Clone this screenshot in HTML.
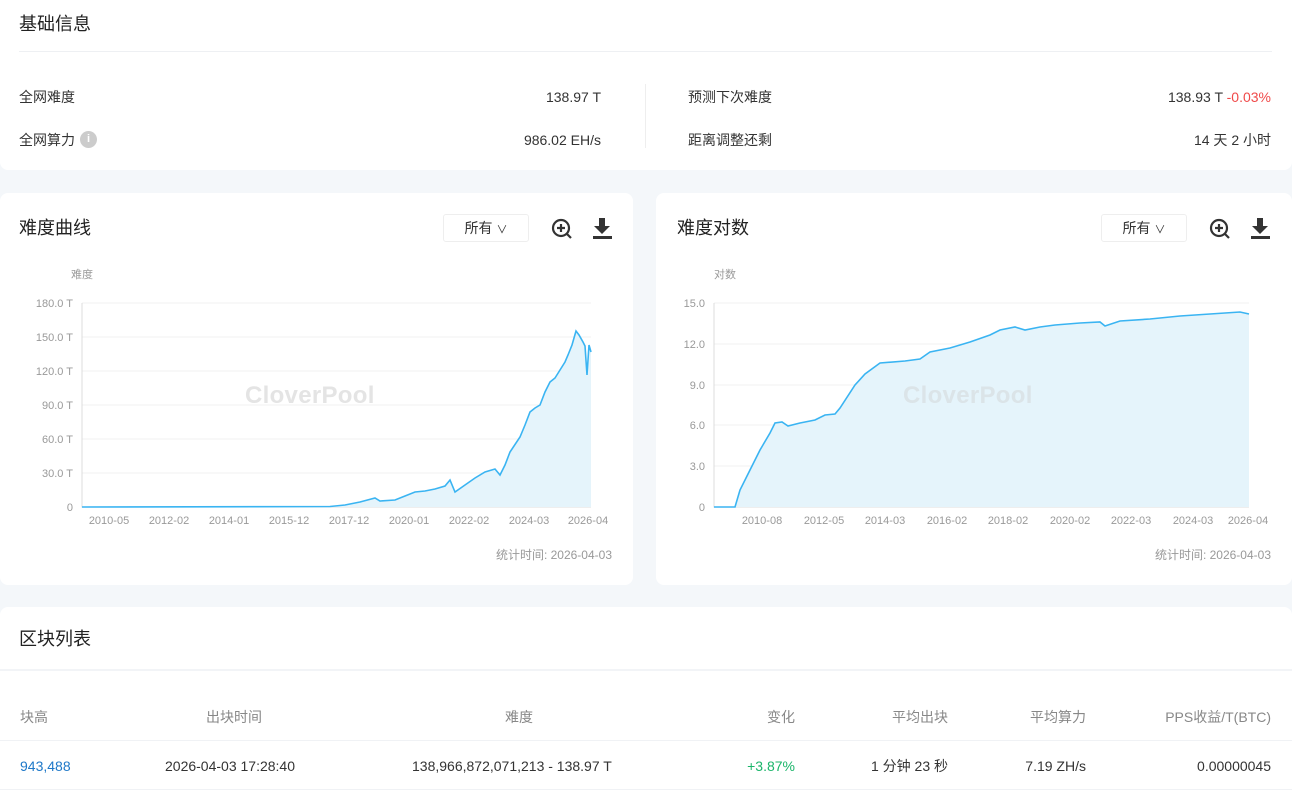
<!DOCTYPE html>
<html style="height:792px;overflow:hidden"><head><meta charset="utf-8"><style>
*{margin:0;padding:0;box-sizing:border-box}
body{width:1292px;height:792px;background:#f4f7fa;font-family:"Liberation Sans","Noto Sans CJK SC",sans-serif;color:#333;position:relative;overflow:hidden}
.card{position:absolute;background:#fff;border-radius:8px}
.a{position:absolute;white-space:nowrap;line-height:20px}
.h{font-size:18px;color:#222;line-height:24px}
.t{font-size:14px;color:#333}
.g{font-size:11px;color:#999}
.sel{position:absolute;border:1px solid #eee;border-radius:3px;width:86px;height:28px;font-size:14px;line-height:26px;text-align:center;color:#333}
.th{font-size:14px;color:#888;top:707px}
.td{font-size:14px;color:#333;top:756px}
</style></head><body>

<div class="card" style="left:0;top:0;width:1292px;height:170px;border-radius:0 0 8px 8px"></div>
<div class="a h" style="left:19px;top:12px">基础信息</div>
<div class="a" style="left:19px;top:51px;width:1253px;height:1px;background:#eef0f3"></div>
<div class="a t" style="left:19px;top:87px">全网难度</div>
<div class="a t" style="right:691px;top:87px">138.97 T</div>
<div class="a t" style="left:19px;top:130px">全网算力</div>
<div class="a" style="left:80px;top:131px;width:17px;height:17px;border-radius:50%;background:#ccc;color:#fff;font-size:11px;line-height:17px;text-align:center;font-weight:bold">i</div>
<div class="a t" style="right:691px;top:130px">986.02 EH/s</div>
<div class="a" style="left:645px;top:84px;width:1px;height:64px;background:#eee"></div>
<div class="a t" style="left:688px;top:87px">预测下次难度</div>
<div class="a t" style="right:21px;top:87px">138.93 T <span style="color:#f04a4a">-0.03%</span></div>
<div class="a t" style="left:688px;top:130px">距离调整还剩</div>
<div class="a t" style="right:21px;top:130px">14 天 2 小时</div>

<div class="card" style="left:0;top:193px;width:633px;height:392px"></div>
<div class="card" style="left:656px;top:193px;width:636px;height:392px"></div>

<div class="a h" style="left:19px;top:216px">难度曲线</div>
<div class="sel" style="left:443px;top:214px">所有 <span style="font-size:11px">&#x2228;</span></div>
<div class="a h" style="left:677px;top:216px">难度对数</div>
<div class="sel" style="left:1101px;top:214px">所有 <span style="font-size:11px">&#x2228;</span></div>

<svg class="a" style="left:0;top:0" width="1292" height="600">
<g fill="none" stroke="#333" stroke-width="2.2">
<circle cx="561" cy="228" r="8"/><path d="M567 234l4 4M557 228h8M561 224v8"/>
<circle cx="1219" cy="228" r="8"/><path d="M1225 234l4 4M1215 228h8M1219 224v8"/>
</g>
<g fill="#333">
<path d="M599 218h6v8h5l-8 8-8-8h5z"/><rect x="593" y="236" width="19" height="3"/>
<path d="M1257 218h6v8h5l-8 8-8-8h5z"/><rect x="1251" y="236" width="19" height="3"/>
</g>
<g stroke="#f0f0f0" stroke-width="1" fill="none">
<path d="M82 303H591M82 337H591M82 371H591M82 405H591M82 439H591M82 473H591"/>
<path d="M714 303H1249M714 344H1249M714 385H1249M714 425H1249M714 466H1249"/>
</g>
<g stroke="#ddd" fill="none"><path d="M82 303V507H591M714 303V507H1249"/></g>
<path d="M82 507L330 506.5L345 505L360 502L375 498L380 501L395 500L405 496L415 492L425 491L435 489L445 486L450 480L455 492L465 485L475 478L485 472L495 469L500 475L505 465L510 452L520 437L525 425L530 412L535 408L540 405L545 392L550 382L555 378L560 370L565 362L568 355L572 345L576 331L579 335L583 342L585 346L587 375L589 345L591 352L591 507Z" fill="#e5f4fb"/>
<path d="M714 507L735 507L740 490L750 470L760 450L770 433L775 423L782 422L788 426L800 423L815 420L825 415L835 414L840 408L855 385L865 374L880 363L905 361L920 359L930 352L950 348L970 342L990 335L1000 330L1015 327L1025 330L1040 327L1055 325L1080 323L1100 322L1105 326L1120 321L1150 319L1180 316L1210 314L1240 312L1249 314L1249 507Z" fill="#e5f4fb"/>
<text x="245" y="403" font-size="24" fill="#e4e4e4" font-family="Liberation Sans" font-weight="bold" letter-spacing="0.3">CloverPool</text>
<text x="903" y="403" font-size="24" fill="#dbe4e8" font-family="Liberation Sans" font-weight="bold" letter-spacing="0.3">CloverPool</text>
<path d="M82 507L330 506.5L345 505L360 502L375 498L380 501L395 500L405 496L415 492L425 491L435 489L445 486L450 480L455 492L465 485L475 478L485 472L495 469L500 475L505 465L510 452L520 437L525 425L530 412L535 408L540 405L545 392L550 382L555 378L560 370L565 362L568 355L572 345L576 331L579 335L583 342L585 346L587 375L589 345L591 352" fill="none" stroke="#3ab4f2" stroke-width="1.6"/>
<path d="M714 507L735 507L740 490L750 470L760 450L770 433L775 423L782 422L788 426L800 423L815 420L825 415L835 414L840 408L855 385L865 374L880 363L905 361L920 359L930 352L950 348L970 342L990 335L1000 330L1015 327L1025 330L1040 327L1055 325L1080 323L1100 322L1105 326L1120 321L1150 319L1180 316L1210 314L1240 312L1249 314" fill="none" stroke="#3ab4f2" stroke-width="1.6"/>
<g font-size="11" fill="#999" font-family="Liberation Sans" text-anchor="end">
<text x="73" y="307">180.0 T</text><text x="73" y="341">150.0 T</text><text x="73" y="375">120.0 T</text><text x="73" y="409">90.0 T</text><text x="73" y="443">60.0 T</text><text x="73" y="477">30.0 T</text><text x="73" y="511">0</text>
<text x="705" y="307">15.0</text><text x="705" y="348">12.0</text><text x="705" y="389">9.0</text><text x="705" y="429">6.0</text><text x="705" y="470">3.0</text><text x="705" y="511">0</text>
</g>
<g font-size="11" fill="#999" font-family="Liberation Sans" text-anchor="middle">
<text x="109" y="524">2010-05</text><text x="169" y="524">2012-02</text><text x="229" y="524">2014-01</text><text x="289" y="524">2015-12</text><text x="349" y="524">2017-12</text><text x="409" y="524">2020-01</text><text x="469" y="524">2022-02</text><text x="529" y="524">2024-03</text><text x="588" y="524">2026-04</text>
<text x="762" y="524">2010-08</text><text x="824" y="524">2012-05</text><text x="885" y="524">2014-03</text><text x="947" y="524">2016-02</text><text x="1008" y="524">2018-02</text><text x="1070" y="524">2020-02</text><text x="1131" y="524">2022-03</text><text x="1193" y="524">2024-03</text><text x="1248" y="524">2026-04</text>
</g>
</svg>
<div class="a g" style="left:71px;top:265px">难度</div>
<div class="a g" style="left:714px;top:265px">对数</div>
<div class="a" style="right:680px;top:545px;font-size:12px;color:#999">统计时间: 2026-04-03</div>
<div class="a" style="right:21px;top:545px;font-size:12px;color:#999">统计时间: 2026-04-03</div>

<div class="card" style="left:0;top:607px;width:1292px;height:185px;border-radius:8px 8px 0 0"></div>
<div class="a h" style="left:19px;top:627px">区块列表</div>
<div class="a" style="left:0;top:669px;width:1292px;height:2px;background:#f2f4f7"></div>
<div class="a th" style="left:20px">块高</div>
<div class="a th" style="left:206px">出块时间</div>
<div class="a th" style="left:505px">难度</div>
<div class="a th" style="right:497px">变化</div>
<div class="a th" style="right:344px">平均出块</div>
<div class="a th" style="right:206px">平均算力</div>
<div class="a th" style="right:21px">PPS收益/T(BTC)</div>
<div class="a" style="left:0;top:740px;width:1292px;height:1px;background:#f0f2f5"></div>
<div class="a td" style="left:20px;color:#1e78c8">943,488</div>
<div class="a td" style="left:165px">2026-04-03 17:28:40</div>
<div class="a td" style="left:412px">138,966,872,071,213 - 138.97 T</div>
<div class="a td" style="right:497px;color:#1bb56a">+3.87%</div>
<div class="a td" style="right:344px">1 分钟 23 秒</div>
<div class="a td" style="right:206px">7.19 ZH/s</div>
<div class="a td" style="right:21px">0.00000045</div>
<div class="a" style="left:0;top:789px;width:1292px;height:1px;background:#f0f2f5"></div>
</body></html>
